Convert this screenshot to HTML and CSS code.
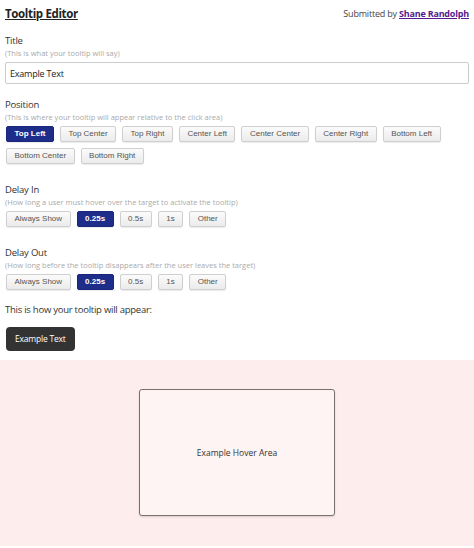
FILE: index.html
```html
<!DOCTYPE html>
<html>
<head>
<meta charset="utf-8">
<link rel="stylesheet" href="styles.css">
</head>
<body>
<div class="page">
  <header class="header">
    <h1 class="heading">Tooltip Editor</h1>
    <div class="credit">Submitted by <a href="#" class="credit-link">Shane Randolph</a></div>
  </header>

  <section class="field field-title">
    <div class="label">Title</div>
    <div class="hint">(This is what your tooltip will say)</div>
    <input class="text-input" type="text" value="Example Text">
  </section>

  <section class="field field-position">
    <div class="label">Position</div>
    <div class="hint">(This is where your tooltip will appear relative to the click area)</div>
    <div class="btn-group">
      <button class="btn btn-active">Top Left</button>
      <button class="btn">Top Center</button>
      <button class="btn">Top Right</button>
      <button class="btn">Center Left</button>
      <button class="btn">Center Center</button>
      <button class="btn">Center Right</button>
      <button class="btn">Bottom Left</button>
      <button class="btn">Bottom Center</button>
      <button class="btn">Bottom Right</button>
    </div>
  </section>

  <section class="field">
    <div class="label">Delay In</div>
    <div class="hint">(How long a user must hover over the target to activate the tooltip)</div>
    <div class="btn-group">
      <button class="btn">Always Show</button>
      <button class="btn btn-active">0.25s</button>
      <button class="btn">0.5s</button>
      <button class="btn">1s</button>
      <button class="btn">Other</button>
    </div>
  </section>

  <section class="field">
    <div class="label">Delay Out</div>
    <div class="hint">(How long before the tooltip disappears after the user leaves the target)</div>
    <div class="btn-group">
      <button class="btn">Always Show</button>
      <button class="btn btn-active">0.25s</button>
      <button class="btn">0.5s</button>
      <button class="btn">1s</button>
      <button class="btn">Other</button>
    </div>
  </section>

  <div class="preview-label">This is how your tooltip will appear:</div>
  <div class="tooltip">Example Text</div>
</div>

<div class="stage">
  <div class="hover-area">Example Hover Area</div>
</div>
</body>
</html>
```

FILE: styles.css
```css
html, body {
  margin: 0;
  padding: 0;
  background: #ffffff;
}
body {
  font-family: "Open Sans", "Noto Sans", sans-serif;
  color: #333333;
}
.page {
  padding: 0 5px;
}
.header {
  display: flex;
  justify-content: space-between;
  align-items: center;
  padding-top: 6px;
  height: 16px;
}
.heading {
  margin: 0;
  font-size: 11.5px;
  font-weight: 700;
  letter-spacing: -0.35px;
  line-height: 16px;
  text-decoration: underline;
  color: #222222;
}
.credit {
  font-size: 9px;
  letter-spacing: -0.2px;
  line-height: 16px;
  color: #444444;
}
.credit-link {
  color: #551a8b;
  font-weight: 700;
}
.field {
  margin-top: 17px;
}
.field-title {
  margin-top: 10px;
}
.field-position {
  margin-top: 12px;
}
.label {
  padding-top: 2px;
  font-size: 9.5px;
  letter-spacing: -0.2px;
  line-height: 14px;
  color: #333333;
}
.hint {
  font-size: 7.5px;
  line-height: 10px;
  color: #aaaaaa;
}
.text-input {
  display: block;
  box-sizing: border-box;
  width: 100%;
  height: 22px;
  margin-top: 4px;
  padding: 0 4px;
  border: 1px solid #cccccc;
  border-radius: 2px;
  font-family: "Open Sans", sans-serif;
  font-size: 9px;
  letter-spacing: -0.2px;
  color: #222222;
  background: #ffffff;
}
.btn-group {
  display: flex;
  flex-wrap: wrap;
  gap: 6px 6px;
  margin-top: 4px;
  padding-left: 1px;
}
.btn {
  height: 16px;
  padding: 0 7.5px;
  border: 1px solid #cfcfcf;
  border-radius: 2px;
  background: linear-gradient(#fbfbfb, #ebebeb);
  box-shadow: 0 1px 1px rgba(0, 0, 0, 0.08);
  font-family: "Liberation Sans", Arial, sans-serif;
  font-size: 8px;
  line-height: 14px;
  color: #555555;
}
.btn-active {
  background: #1f2d8a;
  border-color: #1a267a;
  color: #ffffff;
  font-weight: 700;
}
.preview-label {
  margin-top: 11px;
  padding-top: 2px;
  font-size: 9.5px;
  letter-spacing: -0.25px;
  line-height: 14px;
  color: #333333;
}
.tooltip {
  display: inline-block;
  margin-top: 10px;
  margin-left: 1px;
  height: 24px;
  padding: 0 9px;
  border-radius: 4px;
  background: #333333;
  color: #ffffff;
  font-size: 8.5px;
  letter-spacing: -0.2px;
  line-height: 24px;
}
.stage {
  margin-top: 9px;
  height: 186px;
  background: #fdeded;
  display: flex;
  justify-content: center;
  padding-top: 29px;
  box-sizing: border-box;
}
.hover-area {
  width: 196px;
  height: 127px;
  box-sizing: border-box;
  border: 1px solid #7a7070;
  border-radius: 3px;
  background: #fef4f4;
  box-shadow: 0 1px 2px rgba(0, 0, 0, 0.15);
  display: flex;
  align-items: center;
  justify-content: center;
  font-size: 8.5px;
  color: #333333;
}
```
